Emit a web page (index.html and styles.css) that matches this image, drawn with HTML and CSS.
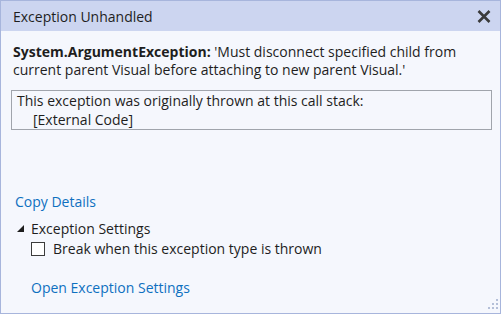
FILE: index.html
```html
<!DOCTYPE html>
<html>
<head>
<meta charset="utf-8">
<link rel="stylesheet" href="styles.css">
</head>
<body>
<div class="dialog">
  <div class="titlebar">
    <span class="title">Exception Unhandled</span>
    <svg class="close" width="14" height="13" viewBox="0 0 14 13"><path d="M1.5 1 L12.5 12 M12.5 1 L1.5 12" stroke="#3a3a3a" stroke-width="2.6" stroke-linecap="butt"/></svg>
  </div>
  <div class="body">
    <p class="message"><b>System.ArgumentException:</b> 'Must disconnect specified child from<br>current parent Visual before attaching to new parent Visual.'</p>
    <div class="stack">
      <div>This exception was originally thrown at this call stack:</div>
      <div class="frame">[External Code]</div>
    </div>
    <a class="link copy">Copy Details</a>
    <div class="settings">
      <div class="settings-head"><span class="tri"></span><span>Exception Settings</span></div>
      <label class="check"><span class="box"></span><span>Break when this exception type is thrown</span></label>
      <a class="link open">Open Exception Settings</a>
    </div>
  </div>
  <svg class="grip" width="12" height="12" viewBox="0 0 12 12">
    <g fill="#b4bfd8">
      <rect x="10" y="0" width="2" height="2"/>
      <rect x="10" y="4" width="2" height="2"/><rect x="6" y="4" width="2" height="2"/>
      <rect x="10" y="8" width="2" height="2"/><rect x="6" y="8" width="2" height="2"/><rect x="2" y="8" width="2" height="2"/>
    </g>
  </svg>
</div>
</body>
</html>
```

FILE: styles.css
```css
html, body {
  margin: 0;
  padding: 0;
}
body {
  width: 501px;
  height: 314px;
  overflow: hidden;
  font-family: "Open Sans", "Noto Sans", sans-serif;
  font-size: 14px;
  color: #1e1e1e;
}
.dialog {
  position: relative;
  box-sizing: border-box;
  width: 501px;
  height: 314px;
  border: 1px solid #a7b5dc;
  background: #f5f7fd;
  display: flex;
  flex-direction: column;
}
.titlebar {
  height: 30px;
  background: #ccd5f0;
  display: flex;
  align-items: center;
  justify-content: space-between;
  padding: 0 9px 0 12px;
  flex: none;
}
.title {
  font-size: 14px;
  color: #1e1e1e;
}
.close {
  display: block;
}
.body {
  flex: 1;
  display: flex;
  flex-direction: column;
  align-items: flex-start;
  padding: 12px 8px 0 12px;
}
.message {
  margin: 0;
  line-height: 18px;
  white-space: nowrap;
}
.message b {
  font-weight: 700;
}
.stack {
  align-self: stretch;
  margin-top: 11px;
  margin-left: -2px;
  border: 1px solid #a0a4ac;
  padding: 0 5px 0 5px;
  line-height: 19px;
}
.frame {
  padding-left: 16px;
}
.link {
  color: #0e70c0;
  cursor: pointer;
  line-height: 19px;
}
.copy {
  margin-top: 62px;
  margin-left: 2px;
}
.settings {
  margin-top: 8px;
  display: flex;
  flex-direction: column;
  align-items: flex-start;
}
.settings-head {
  display: flex;
  align-items: center;
  line-height: 19px;
  margin-left: 4px;
}
.tri {
  width: 0;
  height: 0;
  border-left: 7px solid transparent;
  border-bottom: 7px solid #1e1e1e;
  margin-right: 7px;
}
.check {
  display: flex;
  align-items: center;
  line-height: 22px;
  margin-left: 18px;
}
.box {
  box-sizing: border-box;
  width: 14px;
  height: 14px;
  border: 1px solid #3c3c3c;
  background: #fff;
  margin-right: 8px;
}
.open {
  margin-top: 18px;
  margin-left: 18px;
}
.grip {
  position: absolute;
  right: 2px;
  bottom: 2px;
}
```
